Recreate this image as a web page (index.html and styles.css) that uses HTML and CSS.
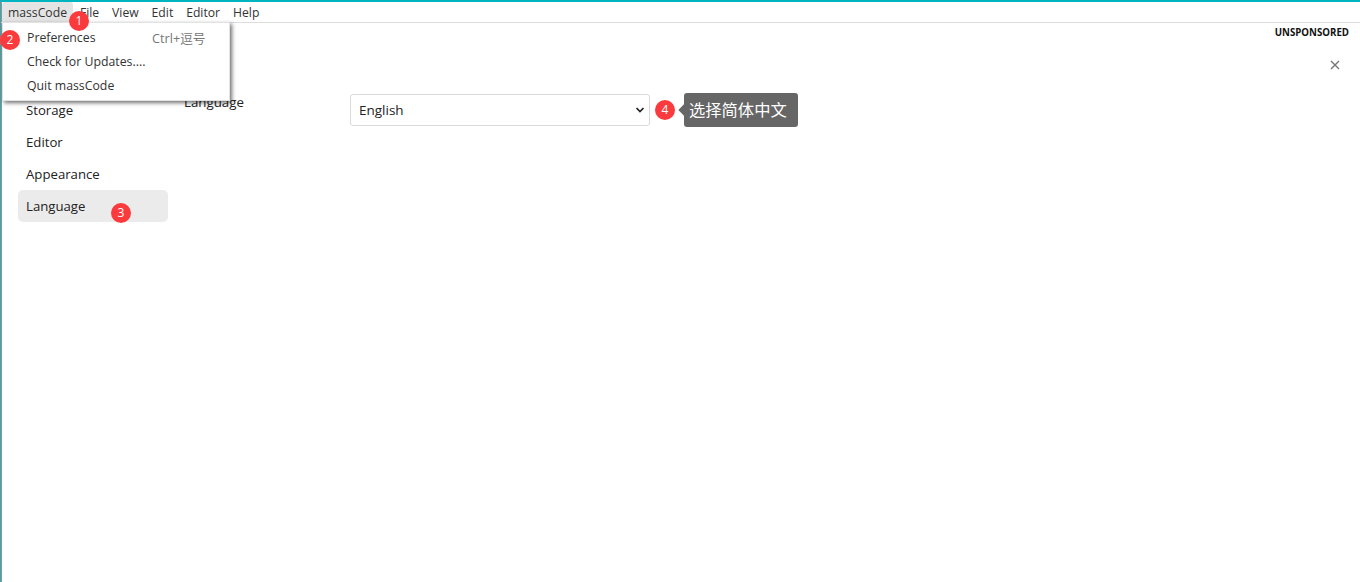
FILE: index.html
```html
<!DOCTYPE html>
<html lang="en">
<head>
<meta charset="utf-8">
<title>massCode</title>
<link rel="stylesheet" href="styles.css">
</head>
<body>
<div class="app">
  <nav class="menubar">
    <span class="menu-item is-open">massCode</span>
    <span class="menu-item">File</span>
    <span class="menu-item">View</span>
    <span class="menu-item">Edit</span>
    <span class="menu-item">Editor</span>
    <span class="menu-item">Help</span>
  </nav>
  <div class="topline"><span class="unsponsored">UNSPONSORED</span></div>
  <div class="close-row">
    <svg class="close" width="10" height="10" viewBox="0 0 10 10"><path d="M1 1 9 9M9 1 1 9" stroke="#777" stroke-width="1.4" fill="none"/></svg>
  </div>
  <div class="prefs">
    <aside class="sidebar">
      <div class="side-item">Storage</div>
      <div class="side-item">Editor</div>
      <div class="side-item">Appearance</div>
      <div class="side-item is-active">Language<span class="badge badge-3">3</span></div>
    </aside>
    <main class="content">
      <label class="field-label">Language</label>
      <div class="select-wrap">
        <select class="lang-select"><option>English</option></select>
        <svg class="select-arrow" width="10" height="6" viewBox="0 0 10 6"><path d="M1.500 1 5 4.500 8.500 1" stroke="#222" stroke-width="1.700" fill="none"/></svg>
      </div>
      <span class="badge badge-4">4</span>
      <span class="tip">选择简体中文</span>
    </main>
  </div>

  <div class="dropdown">
    <div class="drop-item"><span class="drop-label">Preferences</span><span class="drop-key">Ctrl+逗号</span></div>
    <div class="drop-item"><span class="drop-label">Check for Updates....</span></div>
    <div class="drop-item"><span class="drop-label">Quit massCode</span></div>
  </div>
  <span class="badge badge-1">1</span>
  <span class="badge badge-2">2</span>
</div>
</body>
</html>
```
FILE: styles.css
```css
* { box-sizing: border-box; }
html, body { margin: 0; height: 100%; overflow: hidden; background: #fff; }
body { font-family: "Open Sans", "Noto Sans CJK SC", sans-serif; color: #222; }
.app { position: relative; height: 582px; border-top: 2px solid #00b4c0; border-left: 1px solid #888; box-shadow: inset 1px 0 0 #3fb6c4; }
.menubar { display: flex; height: 21px; padding-left: 1px; border-bottom: 1px solid #ddd; font-size: 12.2px; line-height: 22px; color: #333; }
.menu-item { padding: 0 6px; }
.menu-item:nth-child(n+2) { margin-left: 0.9px; }
.is-open { background: #e4e4e4; border-radius: 3px 3px 0 0; }
.topline { display: flex; justify-content: flex-end; padding: 3px 11px 0 0; height: 18px; }
.unsponsored { font-size: 9.7px; line-height: 14px; font-weight: 700; color: #111; }
.close-row { display: flex; justify-content: flex-end; padding: 19px 20px 0 0; height: 53px; }
.prefs { display: flex; }
.sidebar { width: 150px; margin: 0 0 0 17px; display: flex; flex-direction: column; }
.side-item { position: relative; height: 32px; padding: 0 8px; line-height: 32px; font-size: 13.2px; color: #222; border-radius: 5px; }
.is-active { background: #ebebeb; }
.content { display: flex; align-items: flex-start; margin-left: 16px; }
.field-label { width: 166px; font-size: 13.3px; line-height: 18px; margin-top: -1px; }
.select-wrap { position: relative; width: 300px; height: 32px; }
.lang-select { appearance: none; width: 100%; height: 100%; padding: 0 8px; font: 13.5px "Open Sans", sans-serif; color: #222; background: #fff; border: 1px solid #d9d9d9; border-radius: 3px; }
.select-arrow { position: absolute; right: 5px; top: 13px; pointer-events: none; }
.badge { display: inline-flex; align-items: center; justify-content: center; width: 20px; height: 20px; border-radius: 50%; background: #fa3a3c; color: #fff; font-size: 12px; line-height: 1; }
.badge-1, .badge-2 { position: absolute; }
.badge-1 { left: 68px; top: 9px; }
.badge-2 { left: -1px; top: 28px; }
.badge-3 { position: absolute; left: 93px; top: 13px; }
.badge-4 { margin: 6px 0 0 5px; }
.tip { position: relative; margin: -1px 0 0 9px; padding: 0 11px 0 5px; height: 34px; line-height: 32px; font-size: 16.300px; color: #fff; background: #666; border-radius: 3px; font-family: "Noto Sans CJK SC", sans-serif; }
.tip::before { content: ""; position: absolute; left: -4px; top: 13px; width: 8px; height: 8px; background: #666; transform: rotate(45deg); }
.dropdown { position: absolute; left: 1px; top: 20px; width: 228px; height: 79px; padding: 3px 0; background: #fff; border: 1px solid #e2e2e2; box-shadow: 2px 2px 4px rgba(0,0,0,.55); }
.drop-item { display: flex; height: 24px; line-height: 24px; padding-left: 24px; font-size: 12.3px; color: #333; }
.drop-label { width: 125px; white-space: nowrap; }
.drop-key { color: #777; font-size: 12.7px; }
```
